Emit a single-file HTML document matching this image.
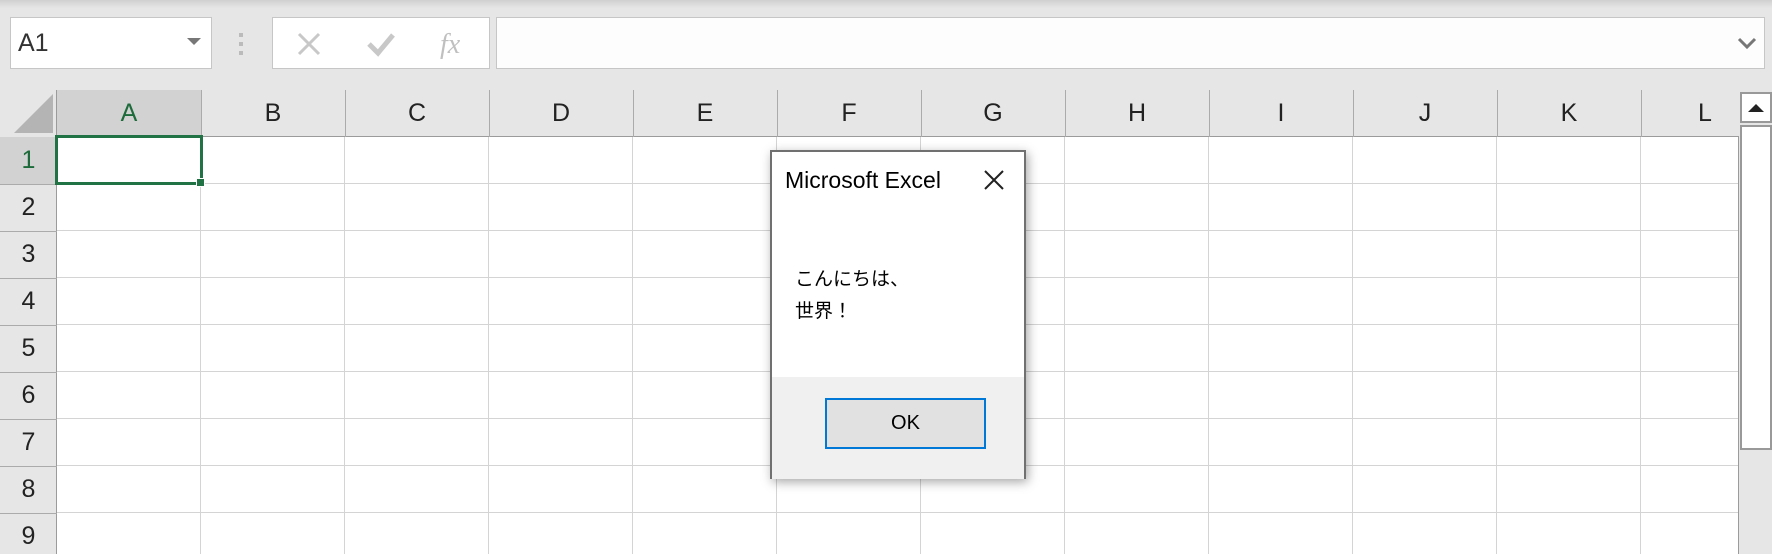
<!DOCTYPE html><html><head><meta charset="utf-8"><style>
html,body{margin:0;width:1772px;height:554px;overflow:hidden}
body{background:#e6e6e6;font-family:"Liberation Sans","Noto Sans CJK JP",sans-serif;position:relative}
.a{position:absolute;box-sizing:border-box}
.ch{position:absolute;top:90px;height:47px;border-right:1px solid #ababab;font-size:25px;text-align:center;line-height:47px;color:#222}
.rh{position:absolute;left:0;width:57px;height:47px;border-bottom:1px solid #ababab;font-size:25px;text-align:center;line-height:47px;color:#222}
</style></head><body>
<div class="a" style="left:0;top:0;width:1772px;height:8px;background:linear-gradient(#d0d0d0,#e6e6e6)"></div>
<div class="a" style="left:10px;top:17px;width:202px;height:52px;background:#fff;border:1px solid #c6c6c6;font-size:25px;line-height:50px;padding-left:7px;color:#333">A1</div>
<div class="a" style="left:187px;top:38px;width:0;height:0;border-left:7px solid transparent;border-right:7px solid transparent;border-top:7px solid #777"></div>
<div class="a" style="left:239px;top:33px;width:4px;height:22px;background:repeating-linear-gradient(#bbb 0 4px,transparent 4px 9px)"></div>
<div class="a" style="left:272px;top:17px;width:218px;height:52px;background:#fff;border:1px solid #c6c6c6"></div>
<svg class="a" style="left:272px;top:17px" width="218" height="52"><path d="M27 17l20 20M47 17l-20 20" stroke="#c8c8c8" stroke-width="3"/><path d="M97 27l9 9 15-18" stroke="#c8c8c8" stroke-width="5" fill="none"/><text x="168" y="36" font-family="Liberation Serif" font-style="italic" font-size="28" fill="#c0c0c0">fx</text></svg>
<div class="a" style="left:496px;top:17px;width:1269px;height:52px;background:#fdfdfd;border:1px solid #c6c6c6"></div>
<svg class="a" style="left:1737px;top:36px" width="20" height="14"><path d="M2 3l8 8 8-8" stroke="#777" stroke-width="3" fill="none"/></svg>
<div class="a" style="left:0;top:90px;width:1739px;height:464px;background:#fff"></div>
<div class="a" style="left:0;top:90px;width:1739px;height:47px;background:#e6e6e6;border-bottom:1px solid #9b9b9b"></div>
<div class="a" style="left:0;top:90px;width:57px;height:464px;background:#e6e6e6;border-right:1px solid #9b9b9b"></div>
<svg class="a" style="left:14px;top:94px" width="40" height="40"><path d="M39 0V39H0Z" fill="#b4b4b4"/></svg>
<div class="ch" style="left:57px;width:144px;background:#d2d2d2;color:#1d6b3a">A</div>
<div class="ch" style="left:201px;width:144px">B</div><div class="ch" style="left:345px;width:144px">C</div><div class="ch" style="left:489px;width:144px">D</div><div class="ch" style="left:633px;width:144px">E</div><div class="ch" style="left:777px;width:144px">F</div><div class="ch" style="left:921px;width:144px">G</div><div class="ch" style="left:1065px;width:144px">H</div><div class="ch" style="left:1209px;width:144px">I</div><div class="ch" style="left:1353px;width:144px">J</div><div class="ch" style="left:1497px;width:144px">K</div><div class="ch" style="left:1641px;width:98px;text-align:left;padding-left:57px;border:none">L</div>
<div class="a" style="left:57px;top:137px;width:1682px;height:417px;border-right:1px solid #9b9b9b;background:repeating-linear-gradient(90deg,transparent 0 143px,#d4d4d4 143px 144px),repeating-linear-gradient(transparent 0 46px,#d4d4d4 46px 47px)"></div>
<div class="rh" style="top:137px;background:#d2d2d2;color:#1d6b3a">1</div>
<div class="rh" style="top:184px">2</div><div class="rh" style="top:231px">3</div><div class="rh" style="top:278px">4</div><div class="rh" style="top:325px">5</div><div class="rh" style="top:372px">6</div><div class="rh" style="top:419px">7</div><div class="rh" style="top:466px">8</div><div class="rh" style="top:513px">9</div>
<div class="a" style="left:55px;top:135px;width:148px;height:50px;border:3px solid #217346"></div>
<div class="a" style="left:196px;top:178px;width:9px;height:9px;background:#217346;border:1px solid #fff"></div>
<div class="a" style="left:1739px;top:90px;width:33px;height:464px;background:#e6e6e6"></div>
<div class="a" style="left:1740px;top:92px;width:32px;height:31px;background:#fff;border:2px solid #999"></div>
<div class="a" style="left:1748px;top:104px;width:0;height:0;border-left:8px solid transparent;border-right:8px solid transparent;border-bottom:8px solid #222"></div>
<div class="a" style="left:1740px;top:125px;width:32px;height:325px;background:#fff;border:2px solid #999"></div>
<div class="a" style="left:770px;top:150px;width:256px;height:329px;background:#fff;border:2px solid #707070;box-shadow:2px 3px 10px rgba(0,0,0,.35)">
<div class="a" style="left:13px;top:15px;font-size:23px;color:#000">Microsoft Excel</div>
<svg class="a" style="left:211px;top:17px" width="22" height="22"><path d="M2 2l18 18M20 2L2 20" stroke="#222" stroke-width="2"/></svg>
<div class="a" style="left:23px;top:112px;font-size:19px;line-height:32px;color:#000">こんにちは、<br>世界！</div>
<div class="a" style="left:0;top:225px;width:252px;height:102px;background:#f0f0f0"></div>
<div class="a" style="left:53px;top:246px;width:161px;height:51px;background:#e1e1e1;border:2px solid #0078d7;font-size:20px;text-align:center;line-height:47px">OK</div>
</div>
</body></html>
